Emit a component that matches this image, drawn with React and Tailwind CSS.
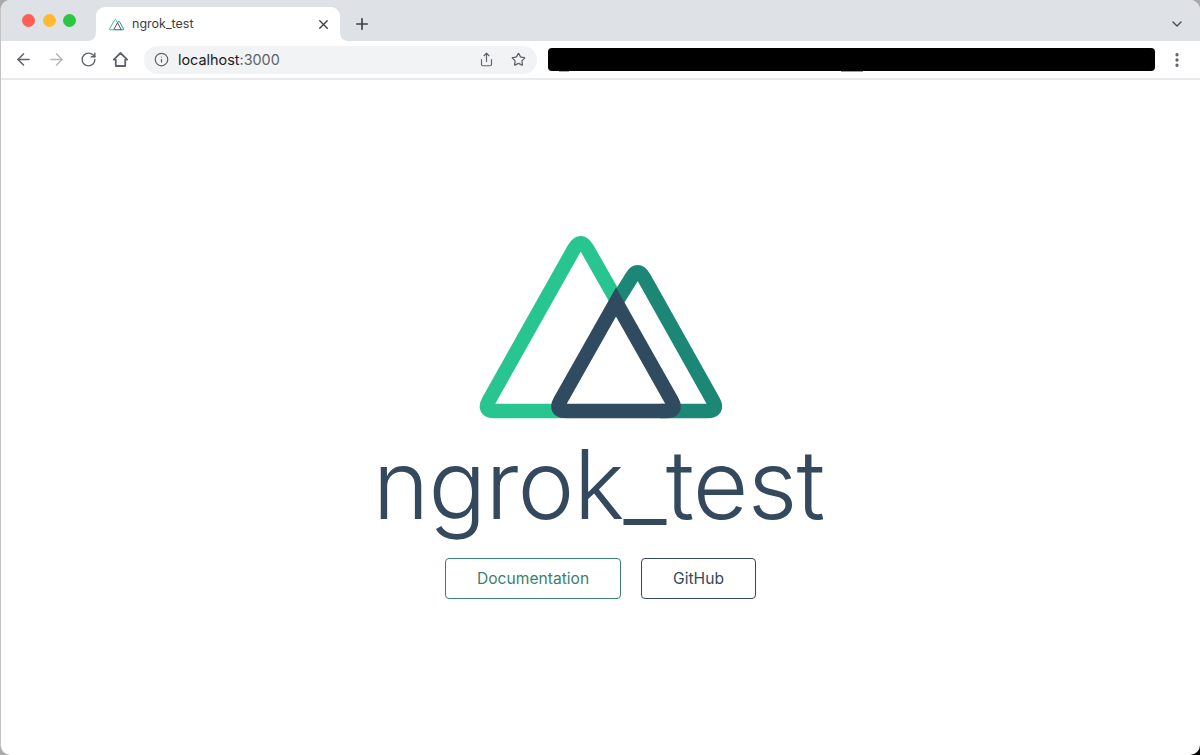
import { ArrowLeft, ArrowRight, ChevronDown, EllipsisVertical, Info, Plus, RotateCw, Share, Star, X } from "lucide-react";

function Logo({ className }) {
	return (
		<svg className={className} viewBox="470 225 260 205" fill="none" strokeWidth="14.3">
			<path stroke="#29c591" d="M617 301 L587.6 249.3 Q580.7 237.1 573.8 249.3 L488.6 401 Q483 411 494.5 411 L562 411" />
			<path stroke="#1c8775" d="M617 301 L631.2 278 Q637.7 266.4 644.2 278 L713.2 401 Q718.8 411 707.3 411 L660 411" />
			<path stroke="#304a60" strokeLinejoin="miter" d="M616 302.1 L671.9 401 Q677.5 411 666 411 L566 411 Q554.5 411 560.1 401 Z" />
		</svg>
	);
}

function Tab() {
	return (
		<div className="relative ml-[95px] flex h-[34px] w-[244px] items-center rounded-t-[9px] bg-white pl-[12px] pr-[9px]">
			<span className="absolute bottom-0 left-[-8px] h-2 w-2 bg-white">
				<span className="block h-2 w-2 rounded-br-[8px] bg-[#dee1e6]"></span>
			</span>
			<Logo className="h-[13px] w-[17px]" />
			<span className="ml-[7px] flex-1 text-[12.5px] text-[#3c4043]">ngrok_test</span>
			<X className="h-[15px] w-[15px] text-[#3c4043]" strokeWidth={2.2} />
			<span className="absolute bottom-0 right-[-8px] h-2 w-2 bg-white">
				<span className="block h-2 w-2 rounded-bl-[8px] bg-[#dee1e6]"></span>
			</span>
		</div>
	);
}

export default function App() {
	return (
		<div className="relative h-[755px] w-[1200px] overflow-hidden bg-[#a9a9a9]">
			<span className="absolute bottom-0 right-0 h-3 w-3 bg-black"></span>
			<div className="relative flex h-full flex-col overflow-hidden rounded-[10px] border-l border-[#c4c4c4] bg-white font-['Inter',sans-serif]">
				<div className="relative flex h-[41px] shrink-0 items-end bg-[#dee1e6]">
					<div className="absolute left-[21px] top-[14px] flex gap-[7.5px]">
						<span className="h-[13px] w-[13px] rounded-full bg-[#fe5f57]"></span>
						<span className="h-[13px] w-[13px] rounded-full bg-[#febb2e]"></span>
						<span className="h-[13px] w-[13px] rounded-full bg-[#2ac840]"></span>
					</div>
					<Tab />
					<Plus className="mb-[8px] ml-[13px] h-[18px] w-[18px] text-[#3c4043]" strokeWidth={2.2} />
					<ChevronDown className="mb-[9px] ml-auto mr-[15px] h-[16px] w-[16px] text-[#4a4d51]" strokeWidth={2} />
				</div>

				<div className="flex h-[39px] shrink-0 items-center border-b-2 border-[#e8eaed] bg-white">
					<ArrowLeft className="ml-[13px] h-[19px] w-[19px] text-[#5f6368]" strokeWidth={2} />
					<ArrowRight className="ml-[14px] h-[19px] w-[19px] text-[#b6b9bd]" strokeWidth={2} />
					<RotateCw className="ml-[14px] h-[17px] w-[17px] text-[#5f6368]" strokeWidth={2} />
					<svg className="ml-[15px] h-[17px] w-[17px] text-[#5f6368]" viewBox="0 0 17 17" fill="none" stroke="currentColor" strokeWidth="1.8" strokeLinejoin="round">
						<path d="M8.5 2 L1.8 8.6 H3.8 V15 H13.2 V8.6 H15.2 Z" />
					</svg>
					<div className="ml-[15px] flex h-[28px] w-[393px] items-center rounded-full bg-[#f1f3f4] pl-[10px] pr-[11px]">
						<Info className="h-[15px] w-[15px] text-[#5f6368]" strokeWidth={2} />
						<span className="ml-[9px] flex-1 text-[14.4px] text-[#202124]">
							localhost<span className="text-[#5f6368]">:3000</span>
						</span>
						<Share className="h-[15px] w-[15px] text-[#5f6368]" strokeWidth={1.8} />
						<Star className="ml-[17px] h-[15px] w-[15px] text-[#5f6368]" strokeWidth={2} />
					</div>
					<div className="relative ml-[11px] h-[23px] w-[607px] rounded-[4px] bg-black">
						<span className="absolute bottom-[-1px] left-[11px] h-px w-[10px] bg-[#f28b82]"></span>
						<span className="absolute bottom-[-1px] left-[293px] h-px w-[22px] bg-[#5bc46e]"></span>
					</div>
					<EllipsisVertical className="ml-[13px] h-[18px] w-[18px] text-[#5f6368]" strokeWidth={2.4} />
				</div>

				<div className="flex flex-1 flex-col items-center pr-[2px] pt-[145px]">
					<Logo className="h-[205px] w-[260px]" />
					<h1 className="mr-[2px] mt-[-1px] text-[96px] font-light leading-[110px] tracking-[-0.8px] text-[#35495e]">ngrok_test</h1>
					<div className="ml-[2px] mt-[19px] flex gap-[20px]">
						<a className="rounded-[4px] border border-[#3b8070] px-[31px] py-[7.5px] text-[15.6px] leading-[24px] text-[#3b8070]">Documentation</a>
						<a className="rounded-[4px] border border-[#35495e] px-[31px] py-[7.5px] text-[15.6px] leading-[24px] text-[#35495e]">GitHub</a>
					</div>
				</div>
			</div>
		</div>
	);
}
